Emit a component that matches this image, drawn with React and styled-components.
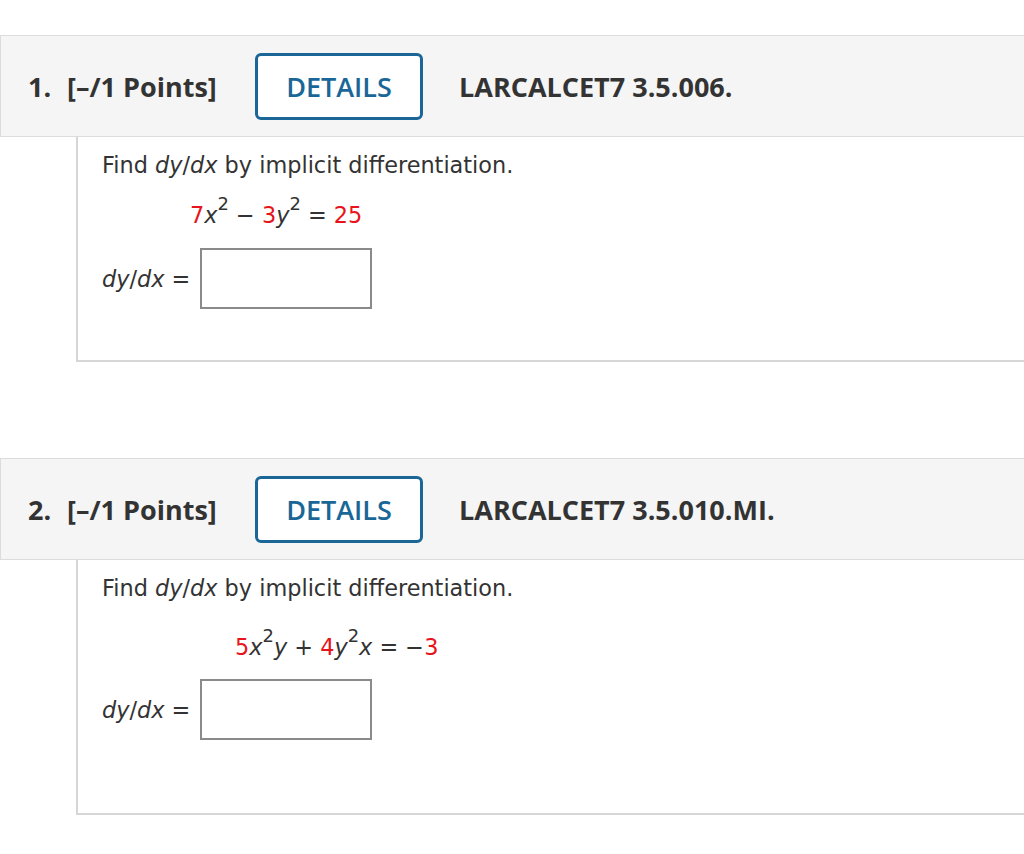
import styled, { createGlobalStyle } from 'styled-components';

const GlobalStyle = createGlobalStyle`
    body {
        margin: 0;
        background: #fff;
    }
`
const Page = styled.div`
    padding-top: 35px;
    width: 1040px;
`
const Question = styled.section`
    margin-bottom: 96px;
`
const Header = styled.div`
    display: flex;
    align-items: center;
    height: 100px;
    background: #f5f5f5;
    border: 1px solid #dcdcdc;
    border-right: none;
    font-family: "Open Sans", sans-serif;
    font-weight: 700;
    font-size: 27px;
    color: #333;
`
const Number = styled.span`
    margin-left: 27px;
    width: 39px;
`
const Points = styled.span`
    width: 188px;
`
const DetailsButton = styled.button`
    box-sizing: border-box;
    width: 168px;
    height: 67px;
    border: 3px solid #1a6797;
    border-radius: 6px;
    background: #fff;
    color: #1a6797;
    font-family: "Open Sans", sans-serif;
    font-weight: 600;
    font-size: 27px;
    padding: 0;
`
const Code = styled.span`
    margin-left: 36px;
`
const Body = styled.div`
    margin-left: 76px;
    min-height: ${p => p.$h}px;
    border-left: 2px solid #d6d6d6;
    border-bottom: 2px solid #d6d6d6;
    padding: 14px 0 0 24px;
    font-family: "DejaVu Sans", Verdana, sans-serif;
    font-size: 22.4px;
    color: #333;
    box-sizing: border-box;
`
const Prompt = styled.p`
    margin: 0;
    line-height: 28px;
`
const Equation = styled.div`
    margin: ${p => p.$mt}px 0 0 ${p => p.$ml}px;
    line-height: 28px;
    white-space: pre;
`
const Red = styled.span`
    color: #e8141b;
`
const AnswerRow = styled.div`
    display: flex;
    align-items: center;
    margin-top: ${p => p.$mt}px;
`
const Label = styled.span`
    width: 98px;
`
const AnswerBox = styled.input`
    box-sizing: border-box;
    width: 172px;
    height: 61px;
    border: 2px solid #8a8a8a;
    background: #fff;
    outline: none;
`
const Sup = styled.sup`
    font-size: 0.8em;
    line-height: 0;
    vertical-align: 0.7em;
`

const QuestionCard = ({ num, code, bodyHeight, children }) => (
    <Question>
        <Header>
            <Number>{num}.</Number>
            <Points>[–/1 Points]</Points>
            <DetailsButton>DETAILS</DetailsButton>
            <Code>{code}</Code>
        </Header>
        <Body $h={bodyHeight}>{children}</Body>
    </Question>
)

const App = () => (
    <Page>
        <GlobalStyle />
        <QuestionCard num={1} code="LARCALCET7 3.5.006." bodyHeight={225}>
            <Prompt>Find <i>dy</i>/<i>dx</i> by implicit differentiation.</Prompt>
            <Equation $mt={22} $ml={88}>
                <Red>7</Red><i>x</i><Sup>2</Sup> − <Red>3</Red><i>y</i><Sup>2</Sup> = <Red>25</Red>
            </Equation>
            <AnswerRow $mt={19}>
                <Label><i>dy</i>/<i>dx</i> =</Label>
                <AnswerBox />
            </AnswerRow>
        </QuestionCard>
        <QuestionCard num={2} code="LARCALCET7 3.5.010.MI." bodyHeight={255}>
            <Prompt>Find <i>dy</i>/<i>dx</i> by implicit differentiation.</Prompt>
            <Equation $mt={31} $ml={133}>
                <Red>5</Red><i>x</i><Sup>2</Sup><i>y</i> + <Red>4</Red><i>y</i><Sup>2</Sup><i>x</i> = −<Red>3</Red>
            </Equation>
            <AnswerRow $mt={18}>
                <Label><i>dy</i>/<i>dx</i> =</Label>
                <AnswerBox />
            </AnswerRow>
        </QuestionCard>
    </Page>
)

export default App;
